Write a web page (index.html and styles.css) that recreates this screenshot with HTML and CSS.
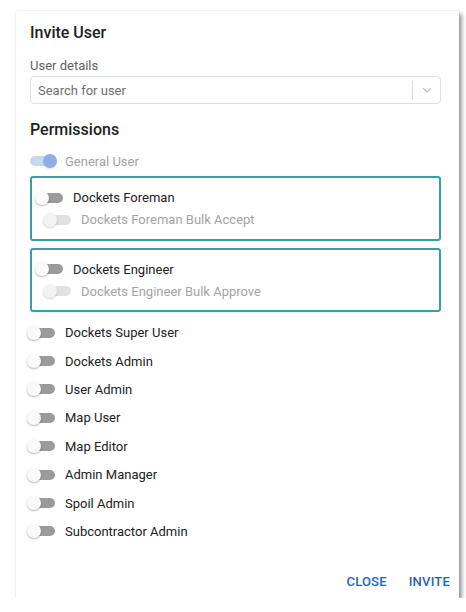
FILE: index.html
```html
<!DOCTYPE html>
<html>
<head>
<meta charset="utf-8">
<link rel="stylesheet" href="styles.css">
</head>
<body>
<div class="dialog">
  <h2 class="title">Invite User</h2>
  <div class="field-label">User details</div>
  <div class="select">
    <span class="placeholder">Search for user</span>
    <span class="sep"></span>
    <svg class="chev" width="10" height="6" viewBox="0 0 10 6"><path d="M1 1l4 4 4-4" fill="none" stroke="#c4c4c4" stroke-width="1.3"/></svg>
  </div>
  <h3 class="section">Permissions</h3>
  <div class="row general">
    <span class="switch on disabled"><span class="track"></span><span class="thumb"></span></span>
    <span class="label muted">General User</span>
  </div>
  <div class="group">
    <div class="row">
      <span class="switch"><span class="track"></span><span class="thumb"></span></span>
      <span class="label">Dockets Foreman</span>
    </div>
    <div class="row sub">
      <span class="switch disabled"><span class="track"></span><span class="thumb"></span></span>
      <span class="label muted">Dockets Foreman Bulk Accept</span>
    </div>
  </div>
  <div class="group">
    <div class="row">
      <span class="switch"><span class="track"></span><span class="thumb"></span></span>
      <span class="label">Dockets Engineer</span>
    </div>
    <div class="row sub">
      <span class="switch disabled"><span class="track"></span><span class="thumb"></span></span>
      <span class="label muted">Dockets Engineer Bulk Approve</span>
    </div>
  </div>
  <div class="list">
    <div class="row item"><span class="switch"><span class="track"></span><span class="thumb"></span></span><span class="label">Dockets Super User</span></div>
    <div class="row item"><span class="switch"><span class="track"></span><span class="thumb"></span></span><span class="label">Dockets Admin</span></div>
    <div class="row item"><span class="switch"><span class="track"></span><span class="thumb"></span></span><span class="label">User Admin</span></div>
    <div class="row item"><span class="switch"><span class="track"></span><span class="thumb"></span></span><span class="label">Map User</span></div>
    <div class="row item"><span class="switch"><span class="track"></span><span class="thumb"></span></span><span class="label">Map Editor</span></div>
    <div class="row item"><span class="switch"><span class="track"></span><span class="thumb"></span></span><span class="label">Admin Manager</span></div>
    <div class="row item"><span class="switch"><span class="track"></span><span class="thumb"></span></span><span class="label">Spoil Admin</span></div>
    <div class="row item"><span class="switch"><span class="track"></span><span class="thumb"></span></span><span class="label">Subcontractor Admin</span></div>
  </div>
  <div class="actions">
    <button class="btn">Close</button>
    <button class="btn">Invite</button>
  </div>
</div>
</body>
</html>
```
FILE: styles.css
```css
html, body {
  margin: 0;
  padding: 0;
  background: #ffffff;
}
body {
  font-family: Roboto, "Liberation Sans", Arial, sans-serif;
  color: #212121;
}
.dialog {
  box-sizing: border-box;
  margin: 11px 0 0 16px;
  width: 443px;
  height: 587px;
  background: #fff;
  padding: 12px 18px 0 14px;
  display: flex;
  flex-direction: column;
  box-shadow: 0 0 2px rgba(0,0,0,0.12), 3px 3px 4px rgba(0,0,0,0.38);
}
.title {
  margin: 0;
  font-size: 16px;
  font-weight: 500;
  line-height: 20px;
  color: #212121;
}
.field-label {
  margin-top: 15px;
  font-size: 13px;
  line-height: 16px;
  color: #5f5f5f;
}
.select {
  box-sizing: border-box;
  margin-top: 2px;
  height: 28px;
  border: 1px solid #e0e0e0;
  border-radius: 4px;
  display: flex;
  align-items: center;
  padding: 0 8px 0 7px;
}
.placeholder {
  flex: 1;
  font-size: 13px;
  color: #6f6f6f;
}
.sep {
  width: 1px;
  height: 19px;
  background: #dcdcdc;
  margin-right: 9px;
}
.chev { display: block; }
.section {
  margin: 16px 0 0 0;
  font-size: 16px;
  font-weight: 500;
  line-height: 20px;
  color: #212121;
}
.row {
  display: flex;
  align-items: center;
  height: 22px;
  margin-left: -3px;
}
.general { margin-top: 10px; }
.label {
  font-size: 13px;
  margin-left: 7px;
  color: #212121;
}
.label.muted { color: #a3a3a3; }
.switch {
  position: relative;
  width: 31px;
  height: 14px;
  flex: none;
}
.track {
  position: absolute;
  left: 3px;
  top: 2px;
  width: 25px;
  height: 10px;
  border-radius: 5px;
  background: #9b9b9b;
}
.thumb {
  position: absolute;
  left: 0;
  top: 0;
  width: 14px;
  height: 14px;
  border-radius: 50%;
  background: #fafafa;
  box-shadow: 0 1px 2px rgba(0,0,0,0.3);
}
.switch.disabled .track { background: #e2e2e2; }
.switch.disabled .thumb { background: #f3f3f3; box-shadow: 0 1px 2px rgba(0,0,0,0.18); }
.switch.on .track { background: #c7d8f1; }
.switch.on .thumb { left: 16px; background: #8cb0e3; box-shadow: 0 1px 1px rgba(0,0,0,0.12); }
.group {
  border: 2px solid #35a0a6;
  border-radius: 3px;
  padding: 8.5px 0 8px 6px;
  margin-top: 4px;
}
.group + .group { margin-top: 7px; }
.sub { padding-left: 8px; }
.list { margin-top: 6.5px; }
.row.item { height: 28.4px; }
.actions {
  margin-top: auto;
  display: flex;
  justify-content: flex-end;
  gap: 22px;
  padding: 0 0 9px 0;
  margin-right: -9px;
}
.btn {
  background: none;
  border: none;
  padding: 0;
  font-family: Roboto, "Liberation Sans", Arial, sans-serif;
  font-size: 13px;
  font-weight: 500;
  letter-spacing: 0.2px;
  text-transform: uppercase;
  color: #1f63c6;
  line-height: 14px;
}
```
